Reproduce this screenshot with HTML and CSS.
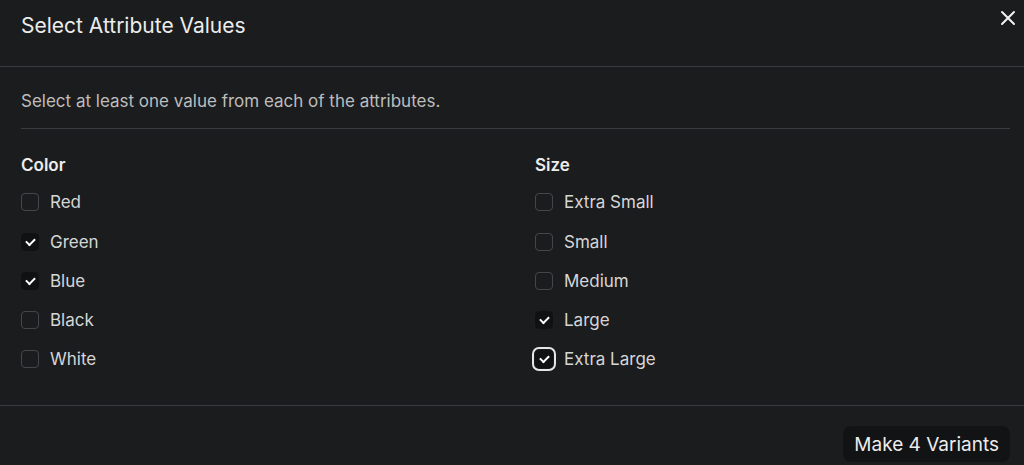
FILE: index.html
```html
<!DOCTYPE html>
<html>
<head>
<meta charset="utf-8">
<link rel="stylesheet" href="styles.css">
</head>
<body>
<div class="dialog">
  <header class="header">
    <h1 class="title">Select Attribute Values</h1>
    <button class="close" aria-label="Close">
      <svg width="16" height="16" viewBox="0 0 16 16"><path d="M2 2L14 14M14 2L2 14" stroke="#f2f2f2" stroke-width="2" stroke-linecap="round"/></svg>
    </button>
  </header>
  <div class="body">
    <p class="desc">Select at least one value from each of the attributes.</p>
    <div class="grid">
      <div class="group">
        <div class="group-title">Color</div>
        <label class="row"><span class="box"></span>Red</label>
        <label class="row"><span class="box checked"></span>Green</label>
        <label class="row"><span class="box checked"></span>Blue</label>
        <label class="row"><span class="box"></span>Black</label>
        <label class="row"><span class="box"></span>White</label>
      </div>
      <div class="group">
        <div class="group-title">Size</div>
        <label class="row"><span class="box"></span>Extra Small</label>
        <label class="row"><span class="box"></span>Small</label>
        <label class="row"><span class="box"></span>Medium</label>
        <label class="row"><span class="box checked"></span>Large</label>
        <label class="row"><span class="box checked focused"></span>Extra Large</label>
      </div>
    </div>
  </div>
  <footer class="footer">
    <button class="primary">Make 4 Variants</button>
  </footer>
</div>
</body>
</html>
```
FILE: styles.css
```css
* { box-sizing: border-box; }
html, body { margin: 0; padding: 0; }
body {
  background: #1b1c1e;
  font-family: Inter, "Noto Sans", "Liberation Sans", sans-serif;
  color: #dcdcdc;
  width: 1024px;
  height: 465px;
  overflow: hidden;
}
.header {
  height: 67px;
  border-bottom: 1px solid #3a3b3e;
  display: flex;
  align-items: flex-start;
  justify-content: space-between;
  padding: 12px 8px 0 21px;
}
.title {
  margin: 0;
  font-size: 21px;
  line-height: 28px;
  font-weight: 400;
  color: #ececec;
}
.close {
  background: none;
  border: 0;
  padding: 0;
  margin-top: -2px;
  width: 16px;
  height: 16px;
  display: flex;
}
.body {
  padding: 22px 14px 0 21px;
}
.desc {
  margin: 0;
  font-size: 17px;
  line-height: 24px;
  color: #bdbdbd;
  padding-bottom: 15px;
  border-bottom: 1px solid #3a3b3e;
}
.grid {
  display: grid;
  grid-template-columns: 514px 1fr;
  padding-top: 24px;
}
.group {
  display: flex;
  flex-direction: column;
  gap: 15.3px;
}
.group-title {
  font-size: 17px;
  line-height: 24px;
  font-weight: 600;
  color: #ececec;
  margin-bottom: -2px;
}
.row {
  display: flex;
  align-items: center;
  gap: 11px;
  font-size: 17px;
  line-height: 24px;
  color: #d6d6d6;
}
.box {
  width: 18px;
  height: 18px;
  border: 1px solid #45464a;
  border-radius: 4px;
  background: transparent;
  flex: none;
  display: flex;
  align-items: center;
  justify-content: center;
}
.box.checked {
  background: #101113;
  border-color: #101113;
}
.box.checked::after {
  content: "";
  width: 7px;
  height: 4px;
  border-left: 2px solid #fff;
  border-bottom: 2px solid #fff;
  transform: translateY(-1px) rotate(-45deg);
}
.box.focused {
  outline: 2px solid #e6e6e6;
  outline-offset: 1px;
}
.footer {
  position: absolute;
  left: 0;
  right: 0;
  top: 405px;
  border-top: 1px solid #3a3b3e;
  display: flex;
  justify-content: flex-end;
  padding: 20px 14px 0 21px;
}
.primary {
  background: #121315;
  border: 0;
  border-radius: 8px;
  height: 36px;
  padding: 0 11px;
  font-family: Inter, "Noto Sans", "Liberation Sans", sans-serif;
  font-size: 19px;
  color: #ececec;
}
```
